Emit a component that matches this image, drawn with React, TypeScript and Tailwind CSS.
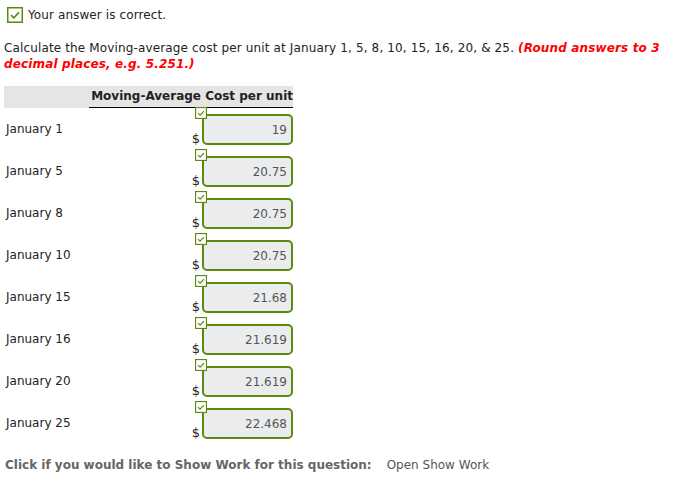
import React from "react";

const rows = [
  ["January 1", "19"],
  ["January 5", "20.75"],
  ["January 8", "20.75"],
  ["January 10", "20.75"],
  ["January 15", "21.68"],
  ["January 16", "21.619"],
  ["January 20", "21.619"],
  ["January 25", "22.468"],
];

function Check({ size }: { size: number }) {
  return (
    <svg width={size} height={size} viewBox="0 0 16 16" className="block">
      <rect x="0.75" y="0.75" width="14.5" height="14.5" fill="#fff" stroke="#5b8a0c" strokeWidth="1.5" />
      <path d="M4 8.2 L6.8 10.8 L12 5.4" fill="none" stroke="#5b8a0c" strokeWidth="1.6" />
    </svg>
  );
}

export default function App() {
  return (
    <div className="w-[673px] h-[493px] bg-white text-[12px] text-[#222] pl-[4px]" style={{ fontFamily: "'DejaVu Sans', Verdana, sans-serif" }}>
      <div className="flex items-center gap-[5px] pt-[7px] pl-[3px] h-[23px]">
        <Check size={16} />
        <span className="leading-[16px] tracking-[0.1px]">Your answer is correct.</span>
      </div>
      <p className="mt-[17px] leading-[16px] pr-2 tracking-[0.14px]">
        Calculate the Moving-average cost per unit at January 1, 5, 8, 10, 15, 16, 20, &amp; 25.{" "}
        <span className="text-[#ff0000] font-bold italic">(Round answers to 3 decimal places, e.g. 5.251.)</span>
      </p>
      <div className="mt-[14px] w-[289px]">
        <div className="flex h-[22px] bg-[#e5e5e5]">
          <div className="w-[85px]" />
          <div className="flex-1 border-b border-black font-bold text-right leading-[20px]">Moving-Average Cost per unit</div>
        </div>
        {rows.map(([label, value]) => (
          <div key={label} className="flex h-[42px]">
            <div className="w-[186px] flex items-center pl-[2px]">{label}</div>
            <div className="flex-1 flex items-end pb-[5px]">
              <span className="leading-[13px] w-[12px] text-center text-[13px]">$</span>
              <div className="relative flex-1 h-[31px] rounded-[5px] border-2 border-[#5b8a0c] bg-[#ebecee] flex items-center justify-end pr-[4px] text-[#555]">
                {value}
                <div className="absolute -top-[9px] -left-[9px]">
                  <Check size={12} />
                </div>
              </div>
            </div>
          </div>
        ))}
      </div>
      <div className="mt-[12px] flex text-[#666]">
        <span className="font-bold pl-[1px]">Click if you would like to Show Work for this question:</span>
        <span className="ml-[15px] text-[#555]">Open Show Work</span>
      </div>
    </div>
  );
}
